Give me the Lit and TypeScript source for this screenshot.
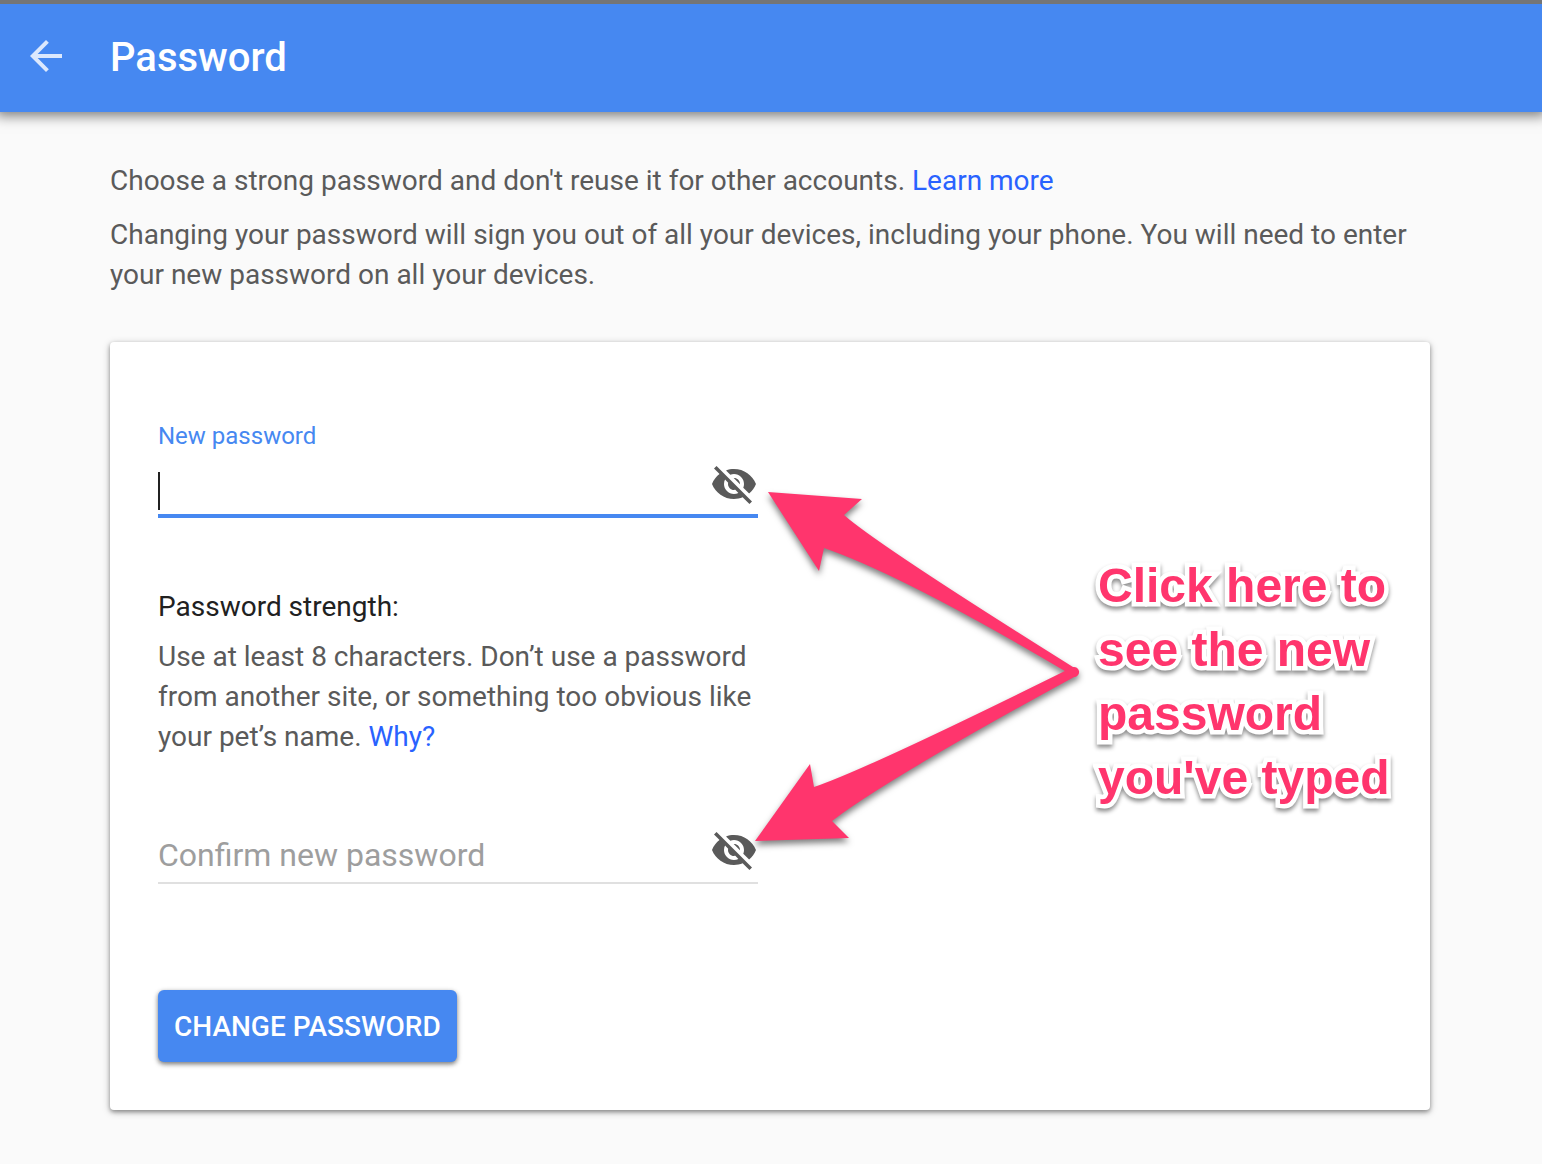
import { LitElement, html, css, svg } from "lit";
import { customElement, property, state } from "lit/decorators.js";

const EYE_OFF =
  "M12 7c2.76 0 5 2.24 5 5 0 .65-.13 1.26-.36 1.83l2.92 2.92c1.51-1.26 2.7-2.89 3.43-4.75-1.73-4.39-6-7.5-11-7.5-1.4 0-2.74.25-3.98.7l2.16 2.16C10.74 7.13 11.35 7 12 7zM2 4.27l2.28 2.28.46.46C3.08 8.3 1.78 10.02 1 12c1.73 4.39 6 7.5 11 7.5 1.55 0 3.03-.3 4.38-.84l.42.42L19.73 22 21 20.73 3.27 3 2 4.27zM7.53 9.8l1.55 1.55c-.05.21-.08.43-.08.65 0 1.66 1.34 3 3 3 .22 0 .44-.03.65-.08l1.55 1.55c-.67.33-1.41.53-2.2.53-2.76 0-5-2.24-5-5 0-.79.2-1.53.53-2.2zm4.31-.78l3.15 3.15.02-.16c0-1.66-1.34-3-3-3l-.17.01z";
const EYE =
  "M12 4.5C7 4.5 2.73 7.61 1 12c1.73 4.39 6 7.5 11 7.5s9.27-3.11 11-7.5c-1.73-4.39-6-7.5-11-7.5zM12 17c-2.76 0-5-2.24-5-5s2.24-5 5-5 5 2.24 5 5-2.24 5-5 5zm0-8c-1.66 0-3 1.34-3 3s1.34 3 3 3 3-1.34 3-3-1.34-3-3-3z";

@customElement("password-field")
export class PasswordField extends LitElement {
  @property() label = "";
  @property({ type: Boolean }) active = false;
  @state() private visible = false;
  @state() private value = "";

  static styles = css`
    :host {
      display: block;
    }
    .label {
      display: block;
      font-size: 24px;
      line-height: 28px;
      color: #4688f1;
    }
    .row {
      display: flex;
      align-items: center;
      height: 64px;
      border-bottom: 2px solid #e0e0e0;
    }
    .row.active {
      border-bottom: 4px solid #4688f1;
    }
    .caret {
      width: 2px;
      height: 38px;
      margin-top: 18px;
      background: #212121;
    }
    .box {
      flex: 1;
      min-width: 0;
      height: 40px;
      margin: 10px 0 0;
      padding: 0;
      border: 0;
      outline: 0;
      background: transparent;
      color: #212121;
      font: 400 32px/40px Roboto, sans-serif;
    }
    .box::placeholder {
      color: #9e9e9e;
      opacity: 1;
    }
    .toggle {
      width: 48px;
      height: 48px;
      margin: 0;
      padding: 0;
      border: 0;
      background: none;
      cursor: pointer;
    }
    .active .toggle {
      margin-top: 4px;
    }
    .icon {
      display: block;
      width: 48px;
      height: 48px;
      fill: #5a5a5a;
    }
  `;

  render() {
    return html`
      ${this.active
        ? html`<label class="label" for="box">${this.label}</label>`
        : null}
      <div class="row ${this.active ? "active" : ""}">
        ${this.active && !this.value
          ? html`<span class="caret"></span>`
          : null}
        <input
          id="box"
          class="box"
          type=${this.visible ? "text" : "password"}
          aria-label=${this.label}
          placeholder=${this.active ? "" : this.label}
          .value=${this.value}
          @input=${(e: Event) =>
            (this.value = (e.target as HTMLInputElement).value)}
        />
        <button
          class="toggle"
          type="button"
          aria-label="Show password"
          aria-pressed=${this.visible ? "true" : "false"}
          @click=${() => (this.visible = !this.visible)}
        >
          <svg class="icon" viewBox="0 0 24 24" aria-hidden="true">
            ${svg`<path d=${this.visible ? EYE : EYE_OFF}></path>`}
          </svg>
        </button>
      </div>
    `;
  }
}

@customElement("app-root")
export class AppRoot extends LitElement {
  static styles = css`
    :host {
      display: block;
      min-height: 100vh;
      background: #fafafa;
      color: #5a5a5a;
      font: 400 28px/40px Roboto, sans-serif;
    }
    a {
      color: #2962ff;
      text-decoration: none;
    }
    .bar {
      position: relative;
      display: flex;
      align-items: center;
      height: 108px;
      padding: 0 22px;
      gap: 40px;
      border-top: 4px solid #757575;
      background: #4688f1;
      box-shadow: 0 0 12px 4px rgba(0, 0, 0, 0.5);
    }
    .back {
      width: 48px;
      height: 48px;
      margin-bottom: 4px;
    }
    .back-icon {
      display: block;
      width: 48px;
      height: 48px;
      fill: #dce8fd;
    }
    .title {
      margin: 0;
      font-size: 40px;
      line-height: 48px;
      font-weight: 500;
      color: #fff;
    }
    .main {
      padding: 49px 112px 54px 110px;
    }
    .intro {
      margin: 0 0 14px;
    }
    .card {
      position: relative;
      margin-top: 47px;
      padding: 80px 48px 48px;
      border-radius: 4px;
      background: #fff;
      box-shadow: 0 2px 4px rgba(0, 0, 0, 0.36), 0 2px 8px rgba(0, 0, 0, 0.2);
    }
    .form {
      max-width: 600px;
    }
    .strength {
      margin: 69px 0 10px;
      font-size: 28px;
      line-height: 40px;
      font-weight: 400;
      color: #212121;
    }
    .advice {
      margin: 0 0 61px;
    }
    .submit {
      display: block;
      height: 72px;
      margin-top: 106px;
      padding: 2px 16px 0;
      border: 0;
      border-radius: 6px;
      background: #4688f1;
      color: #fff;
      font: 500 28px/40px Roboto, sans-serif;
      box-shadow: 0 2px 4px rgba(0, 0, 0, 0.4), 0 2px 6px rgba(0, 0, 0, 0.2);
      cursor: pointer;
    }
    .arrows {
      position: absolute;
      left: 640px;
      top: 138px;
      width: 340px;
      height: 380px;
      fill: #ff356d;
      filter: drop-shadow(0 4px 3px rgba(0, 0, 0, 0.5));
      pointer-events: none;
    }
    .callout {
      position: absolute;
      left: 988px;
      top: 212px;
      margin: 0;
      font: 700 48px/64px "Liberation Sans", Arial, sans-serif;
      color: #ff356d;
      white-space: nowrap;
      -webkit-text-stroke: 9px #fff;
      stroke-linejoin: round;
      paint-order: stroke fill;
      filter: drop-shadow(0 3px 2px rgba(0, 0, 0, 0.45));
    }
  `;

  render() {
    return html`
      <header class="bar">
        <a class="back" href="#" aria-label="Back">
          <svg class="back-icon" viewBox="0 0 24 24" aria-hidden="true">
            <path
              d="M20 11H7.83l5.59-5.59L12 4l-8 8 8 8 1.41-1.41L7.83 13H20v-2z"
            ></path>
          </svg>
        </a>
        <h1 class="title">Password</h1>
      </header>
      <main class="main">
        <p class="intro">
          Choose a strong password and don't reuse it for other accounts.
          <a href="#">Learn more</a>
        </p>
        <p class="intro">
          Changing your password will sign you out of all your devices,
          including your phone. You will need to enter your new password on all
          your devices.
        </p>
        <section class="card">
          <form class="form" @submit=${(e: Event) => e.preventDefault()}>
            <password-field label="New password" active></password-field>
            <h2 class="strength">Password strength:</h2>
            <p class="advice">
              Use at least 8 characters. Don’t use a password from another site,
              or something too obvious like your pet’s name.
              <a href="#">Why?</a>
            </p>
            <password-field label="Confirm new password"></password-field>
            <button class="submit" type="submit">CHANGE PASSWORD</button>
          </form>
          <svg class="arrows" viewBox="750 480 340 380" aria-hidden="true">
            <path
              d="M768 492L862 499L844 515Q878 545 1073 667A5 5 0 0 1 1075 677Q905 576 824 548L819 571Z"
            ></path>
            <path
              d="M755 841L810 764L814 787Q865 770 1071 668A5 5 0 0 1 1076 676Q885 780 832 821L849 838Z"
            ></path>
          </svg>
          <p class="callout">
            Click here to<br />see the new<br />password<br />you've typed
          </p>
        </section>
      </main>
    `;
  }
}
